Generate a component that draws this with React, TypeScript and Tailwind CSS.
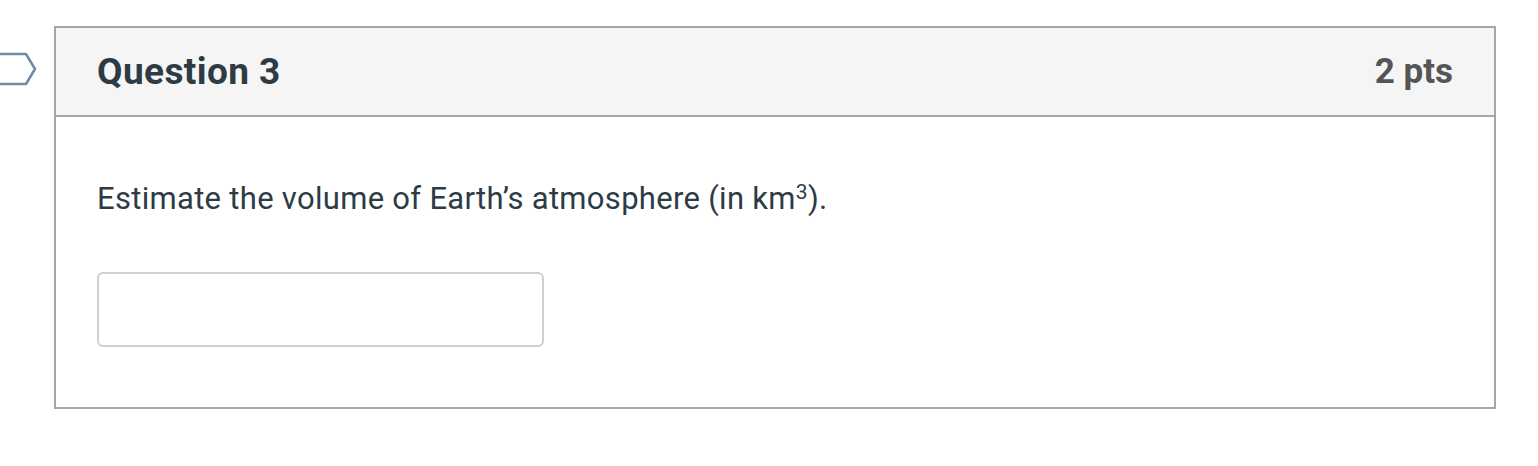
import React from 'react';

const QuestionMarker = () => (
  <svg width="38" height="34" viewBox="0 0 38 34" className="absolute left-0 top-[52px]">
    <path d="M-4 2 H26 L35 17 L26 32 H-4 Z" fill="#ffffff" stroke="#6f8aa3" strokeWidth="2.5" strokeLinejoin="round" />
  </svg>
);

const App = () => {
  return (
    <div className="relative w-[1538px] h-[466px] bg-white font-['Roboto',sans-serif] overflow-hidden">
      <QuestionMarker />

      <div className="ml-[54px] mt-[26px] w-[1442px] border-2 border-[#a6a6a6]">
        {/* Header */}
        <div className="flex items-center justify-between h-[89px] bg-[#f5f5f5] border-b-2 border-[#a6a6a6] px-[41px]">
          <h2 className="text-[37px] tracking-[0.4px] font-bold text-[#2d3b45] leading-none">Question 3</h2>
          <span className="text-[35px] font-bold text-[#555555] leading-none">2 pts</span>
        </div>

        {/* Body */}
        <div className="px-[41px] pt-[62px] pb-[60px]">
          <p className="text-[31px] tracking-[0.3px] text-[#2d3b45] leading-[40px]">
            Estimate the volume of Earth’s atmosphere (in km<sup className="text-[21px]">3</sup>).
          </p>
          <input
            type="text"
            className="mt-[53px] block w-[447px] h-[75px] border-2 border-[#cfcfcf] rounded-[6px] bg-white px-3 outline-none"
          />
        </div>
      </div>
    </div>
  );
};

export default App;
